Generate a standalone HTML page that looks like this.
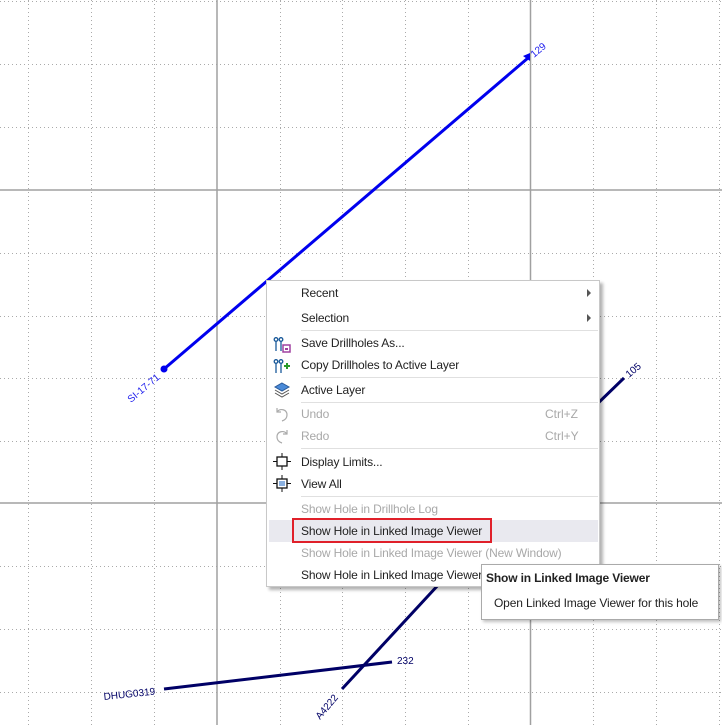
<!DOCTYPE html>
<html><head><style>
body{margin:0;width:722px;height:725px;overflow:hidden;background:#fff;font-family:"Liberation Sans",sans-serif;position:relative}
svg.bg{position:absolute;left:0;top:0}
.menu{position:absolute;left:266px;top:280px;width:332px;height:305px;background:#fff;border:1px solid #c8c8c8;box-shadow:3px 3px 3px rgba(0,0,0,.3)}
.it{position:absolute;left:34px;font-size:12px;color:#222;white-space:nowrap;letter-spacing:-0.15px}
.dis{color:#a8a8a8}
.sc{position:absolute;left:278px;font-size:12px;color:#a8a8a8}
.sep{position:absolute;left:34px;right:1px;height:1px;background:#e0e0e0}
.arr{position:absolute;right:8px;width:0;height:0;border-left:4px solid #555;border-top:4px solid transparent;border-bottom:4px solid transparent}
.ic{position:absolute;left:6px}
.tip{position:absolute;left:481px;top:564px;width:236px;height:54px;background:#fff;border:1px solid #aaa;box-shadow:2px 2px 3px rgba(0,0,0,.25)}
</style></head><body>
<svg class="bg" width="722" height="725">
<g stroke="#aaa" stroke-width="1" stroke-dasharray="1,3">
<line x1="28.5" y1="0" x2="28.5" y2="725"/><line x1="91.5" y1="0" x2="91.5" y2="725"/><line x1="154.5" y1="0" x2="154.5" y2="725"/>
<line x1="280.5" y1="0" x2="280.5" y2="725"/><line x1="342.5" y1="0" x2="342.5" y2="725"/><line x1="405.5" y1="0" x2="405.5" y2="725"/><line x1="468.5" y1="0" x2="468.5" y2="725"/>
<line x1="593.5" y1="0" x2="593.5" y2="725"/><line x1="656.5" y1="0" x2="656.5" y2="725"/><line x1="719.5" y1="0" x2="719.5" y2="725"/>
<line x1="0" y1="1.5" x2="722" y2="1.5"/><line x1="0" y1="64.5" x2="722" y2="64.5"/><line x1="0" y1="127.5" x2="722" y2="127.5"/>
<line x1="0" y1="253.5" x2="722" y2="253.5"/><line x1="0" y1="316.5" x2="722" y2="316.5"/><line x1="0" y1="378.5" x2="722" y2="378.5"/><line x1="0" y1="441.5" x2="722" y2="441.5"/>
<line x1="0" y1="566.5" x2="722" y2="566.5"/><line x1="0" y1="629.5" x2="722" y2="629.5"/><line x1="0" y1="692.5" x2="722" y2="692.5"/>
</g>
<g stroke="#a0a0a0" stroke-width="1.5">
<line x1="217" y1="0" x2="217" y2="725"/><line x1="530.5" y1="0" x2="530.5" y2="725"/>
<line x1="0" y1="190" x2="722" y2="190"/><line x1="0" y1="503" x2="722" y2="503"/>
</g>
<line x1="164" y1="369" x2="528" y2="58" stroke="#0000ee" stroke-width="3"/>
<circle cx="164" cy="369" r="3.5" fill="#0000ee"/>
<path d="M523 56 L530 53 L530 61 Z" fill="#0000ee"/>
<text x="0" y="0" transform="translate(534,58) rotate(-40)" font-size="10" fill="#2222ee">129</text>
<text x="0" y="0" transform="translate(131,403) rotate(-40)" font-size="10" fill="#2222ee">SI-17-71</text>
<line x1="560" y1="440" x2="624" y2="378" stroke="#000066" stroke-width="3"/>
<text x="0" y="0" transform="translate(629,378) rotate(-40)" font-size="10" fill="#000066">105</text>
<line x1="342" y1="689" x2="440" y2="583" stroke="#000066" stroke-width="3"/>
<text x="0" y="0" transform="translate(320,720) rotate(-50)" font-size="10" fill="#000066">A4222</text>
<line x1="164" y1="689" x2="392" y2="662" stroke="#000066" stroke-width="3"/>
<text x="0" y="0" transform="translate(104,700) rotate(-6)" font-size="10" fill="#000066">DHUG0319</text>
<text x="397" y="664" font-size="10" fill="#000066">232</text>
</svg>

<div class="menu">
<div class="it" style="top:5px">Recent</div><div class="arr" style="top:8px"></div>
<div class="it" style="top:30px">Selection</div><div class="arr" style="top:33px"></div>
<div class="sep" style="top:49px"></div>
<svg class="ic" style="top:56px" width="18" height="16"><g stroke="#1a5a9a" stroke-width="1.3" fill="none"><circle cx="3" cy="2.5" r="1.8"/><circle cx="8" cy="2.5" r="1.8"/><line x1="3" y1="4.5" x2="3" y2="14"/><line x1="8" y1="4.5" x2="8" y2="14"/></g><rect x="10" y="8" width="7" height="7" fill="none" stroke="#a040a0" stroke-width="1.5"/><rect x="12" y="11" width="3" height="2" fill="#a040a0"/></svg>
<div class="it" style="top:55px">Save Drillholes As...</div>
<svg class="ic" style="top:78px" width="18" height="16"><g stroke="#1a5a9a" stroke-width="1.3" fill="none"><circle cx="3" cy="2.5" r="1.8"/><circle cx="8" cy="2.5" r="1.8"/><line x1="3" y1="4.5" x2="3" y2="14"/><line x1="8" y1="4.5" x2="8" y2="14"/></g><g stroke="#2a9a2a" stroke-width="2"><line x1="11" y1="7" x2="17" y2="7"/><line x1="14" y1="4" x2="14" y2="10"/></g></svg>
<div class="it" style="top:77px">Copy Drillholes to Active Layer</div>
<div class="sep" style="top:96px"></div>
<svg class="ic" style="top:101px" width="18" height="16"><path d="M9 1 L16 5 L9 9 L2 5 Z" fill="#4a8ad8" stroke="#2a5a9a"/><path d="M2 8 L9 12 L16 8 M2 11 L9 15 L16 11" fill="none" stroke="#555"/></svg>
<div class="it" style="top:102px">Active Layer</div>
<div class="sep" style="top:121px"></div>
<svg class="ic" style="top:125px" width="18" height="16"><path d="M4 2 L4 6 L8 6 M4 6 C7 2 14 3 14 9 C14 12 12 14 9 15" fill="none" stroke="#aaa" stroke-width="1.2"/></svg>
<div class="it dis" style="top:126px">Undo</div><div class="sc" style="top:126px">Ctrl+Z</div>
<svg class="ic" style="top:147px" width="18" height="16"><path d="M14 2 L14 6 L10 6 M14 6 C11 2 4 3 4 9 C4 12 6 14 9 15" fill="none" stroke="#aaa" stroke-width="1.2"/></svg>
<div class="it dis" style="top:148px">Redo</div><div class="sc" style="top:148px">Ctrl+Y</div>
<div class="sep" style="top:167px"></div>
<svg class="ic" style="top:172px" width="18" height="17"><rect x="4" y="4" width="10" height="9" fill="none" stroke="#111" stroke-width="1.3"/><g stroke="#111"><line x1="9" y1="0" x2="9" y2="4"/><line x1="9" y1="13" x2="9" y2="17"/><line x1="0" y1="8.5" x2="4" y2="8.5"/><line x1="14" y1="8.5" x2="18" y2="8.5"/></g></svg>
<div class="it" style="top:174px">Display Limits...</div>
<svg class="ic" style="top:194px" width="18" height="17"><rect x="4" y="4" width="10" height="9" fill="none" stroke="#111" stroke-width="1.3"/><rect x="6" y="6" width="6" height="5" fill="#8ab0e0"/><g stroke="#111"><line x1="9" y1="0" x2="9" y2="4"/><line x1="9" y1="13" x2="9" y2="17"/><line x1="0" y1="8.5" x2="4" y2="8.5"/><line x1="14" y1="8.5" x2="18" y2="8.5"/></g></svg>
<div class="it" style="top:196px">View All</div>
<div class="sep" style="top:215px"></div>
<div class="it dis" style="top:221px">Show Hole in Drillhole Log</div>
<div style="position:absolute;left:2px;top:239px;width:329px;height:22px;background:#e9e9ef"></div>
<div style="position:absolute;left:25px;top:237px;width:196px;height:21px;border:2px solid #e0202a"></div>
<div class="it" style="top:243px">Show Hole in Linked Image Viewer</div>
<div class="it dis" style="top:265px">Show Hole in Linked Image Viewer (New Window)</div>
<div class="it" style="top:287px">Show Hole in Linked Image Viewer</div>
</div>

<div class="tip">
<div style="position:absolute;left:4px;top:6px;font-size:12px;font-weight:bold;color:#222;letter-spacing:-0.15px">Show in Linked Image Viewer</div>
<div style="position:absolute;left:12px;top:31px;font-size:12px;color:#222;letter-spacing:-0.15px">Open Linked Image Viewer for this hole</div>
</div>
</body></html>
